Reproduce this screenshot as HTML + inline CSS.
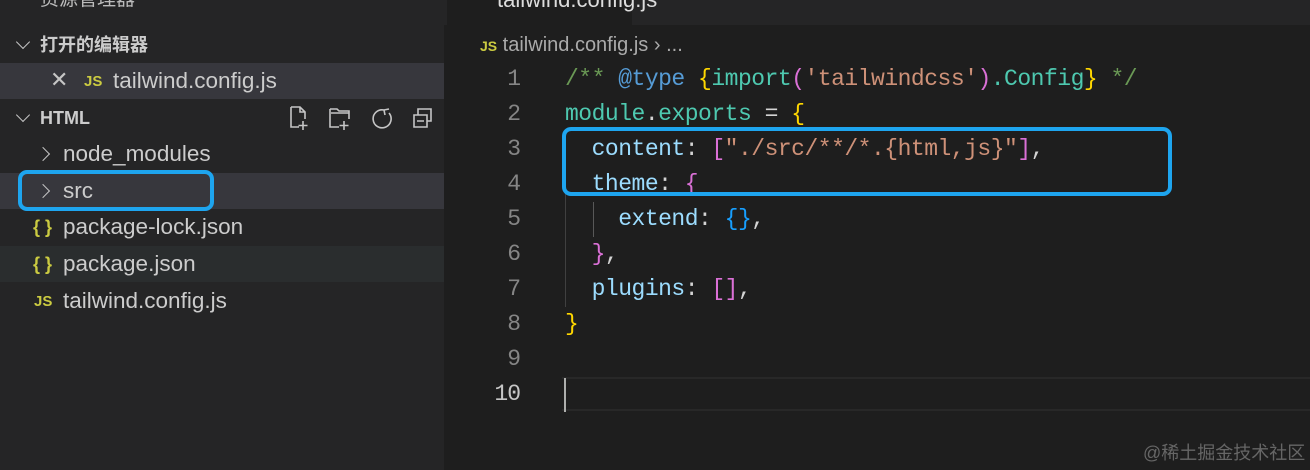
<!DOCTYPE html>
<html><head><meta charset="utf-8"><style>
*{margin:0;padding:0;box-sizing:border-box}
body{width:1310px;height:470px;background:#1e1e1e;position:relative;overflow:hidden;font-family:"Liberation Sans","Noto Sans CJK SC",sans-serif}
.side{position:absolute;left:0;top:0;width:444px;height:470px;background:#252526}
.sb{position:absolute;left:0;width:444px;color:#cccccc;font-size:22.5px;line-height:36px;height:36px;white-space:nowrap}
.chev{position:absolute;width:10px;height:10px;border-left:1.5px solid #c5c5c5;border-bottom:1.5px solid #c5c5c5}
.js{color:#cbcb41;font-weight:bold;font-size:15px;position:absolute}
.br{color:#cbcb41;font-weight:bold;font-size:18px;position:absolute}
.box{position:absolute;border:4px solid #1ea5ef;border-radius:9px}
.code{position:absolute;left:565px;font-family:"Liberation Mono",monospace;font-size:23px;line-height:35px;white-space:pre;color:#d4d4d4;letter-spacing:-0.5px}
.ln{position:absolute;width:520px;left:0;text-align:right;font-family:"Liberation Mono",monospace;font-size:23px;line-height:35px;color:#858585;letter-spacing:-1px}
.c{color:#6a9955}.k{color:#569cd6}.y{color:#ffd700}.t{color:#4ec9b0}.p{color:#da70d6}.s{color:#ce9178}.v{color:#9cdcfe}.b{color:#179fff}
</style></head><body>
<div class="side">
 <div class="sb" style="top:-18px;left:40px;color:#bbb;font-size:19px">资源管理器</div>
 <div class="sb" style="top:27px"><span class="chev" style="left:18px;top:10px;transform:rotate(-45deg)"></span><span style="position:absolute;left:40px;font-weight:bold;font-size:18px">打开的编辑器</span></div>
 <div class="sb" style="top:63px;background:#37373d"><span style="position:absolute;left:50px;top:-1px;font-size:22px;color:#c5c5c5">✕</span><span class="js" style="left:84px;top:1px">JS</span><span style="position:absolute;left:113px">tailwind.config.js</span></div>
 <div class="sb" style="top:100px"><span class="chev" style="left:18px;top:10px;transform:rotate(-45deg)"></span><span style="position:absolute;left:40px;font-weight:bold;font-size:18px">HTML</span>
  <svg style="position:absolute;left:288px;top:5px" width="150" height="26" fill="none" stroke="#c5c5c5" stroke-width="1.6">
   <path d="M3 2h9l5 5v7M3 2v20h8M12 2v5h5M15 16v9M10.5 20.5h9"/>
   <path d="M42 4h7l2 2h10v8M42 4v18h9M43 8h18M56 16v9M51.5 20.5h9"/>
   <path d="M96 5a9 9 0 1 0 5 3M96 5l5-1M96 5l1 5"/>
   <path d="M126 10h13v12h-13zM130 10V4h13v12h-4M129 16h7"/>
  </svg></div>
 <div class="sb" style="top:136px"><span class="chev" style="left:38px;top:13px;transform:rotate(-135deg)"></span><span style="position:absolute;left:63px">node_modules</span></div>
 <div class="sb" style="top:173px;background:#37373d"><span class="chev" style="left:38px;top:13px;transform:rotate(-135deg)"></span><span style="position:absolute;left:63px">src</span></div>
 <div class="sb" style="top:209px"><span class="br" style="left:33px">{ }</span><span style="position:absolute;left:63px">package-lock.json</span></div>
 <div class="sb" style="top:246px;background:#2a2d2e"><span class="br" style="left:33px">{ }</span><span style="position:absolute;left:63px">package.json</span></div>
 <div class="sb" style="top:283px"><span class="js" style="left:34px;top:1px">JS</span><span style="position:absolute;left:63px">tailwind.config.js</span></div>
</div>
<div class="box" style="left:18px;top:170px;width:196px;height:41px"></div>
<div style="position:absolute;left:444px;top:0;width:866px;height:25px;background:#252526"></div>
<div style="position:absolute;left:447px;top:0;width:185px;height:25px;background:#1e1e1e;color:#ddd;font-size:22px;line-height:0"><span style="position:absolute;left:50px;top:0">tailwind.config.js</span></div>
<div style="position:absolute;left:480px;top:33px;font-size:20px;color:#aaa;white-space:nowrap;line-height:24px"><span style="color:#cbcb41;font-weight:bold;font-size:14px">JS</span> tailwind.config.js › ...</div>
<div style="position:absolute;left:562px;top:377px;width:748px;height:34px;border-top:2px solid #282828;border-bottom:2px solid #282828"></div>
<div style="position:absolute;left:564px;top:378px;width:2px;height:34px;background:#aeafad"></div>
<div style="position:absolute;left:565px;top:132px;width:1px;height:175px;background:#404040"></div>
<div style="position:absolute;left:593px;top:202px;width:1px;height:35px;background:#585858"></div>
<div class="ln" style="top:62px">1<br>2<br>3<br>4<br>5<br>6<br>7<br>8<br>9<br><span style="color:#c6c6c6">10</span></div>
<div class="code" style="top:62px"><span class="c">/** </span><span class="k">@type</span> <span class="y">{</span><span class="t">import</span><span class="p">(</span><span class="s">'tailwindcss'</span><span class="p">)</span><span class="t">.Config</span><span class="y">}</span><span class="c"> */</span>
<span class="t">module</span>.<span class="t">exports</span> = <span class="y">{</span>
  <span class="v">content</span>: <span class="p">[</span><span class="s">"./src/**/*.{html,js}"</span><span class="p">]</span>,
  <span class="v">theme</span>: <span class="p">{</span>
    <span class="v">extend</span>: <span class="b">{}</span>,
  <span class="p">}</span>,
  <span class="v">plugins</span>: <span class="p">[]</span>,
<span class="y">}</span></div>
<div class="box" style="left:562px;top:127px;width:610px;height:69px"></div>
<div style="position:absolute;left:1143px;top:439px;font-size:18px;color:#666;white-space:nowrap">@稀土掘金技术社区</div>
</body></html>
